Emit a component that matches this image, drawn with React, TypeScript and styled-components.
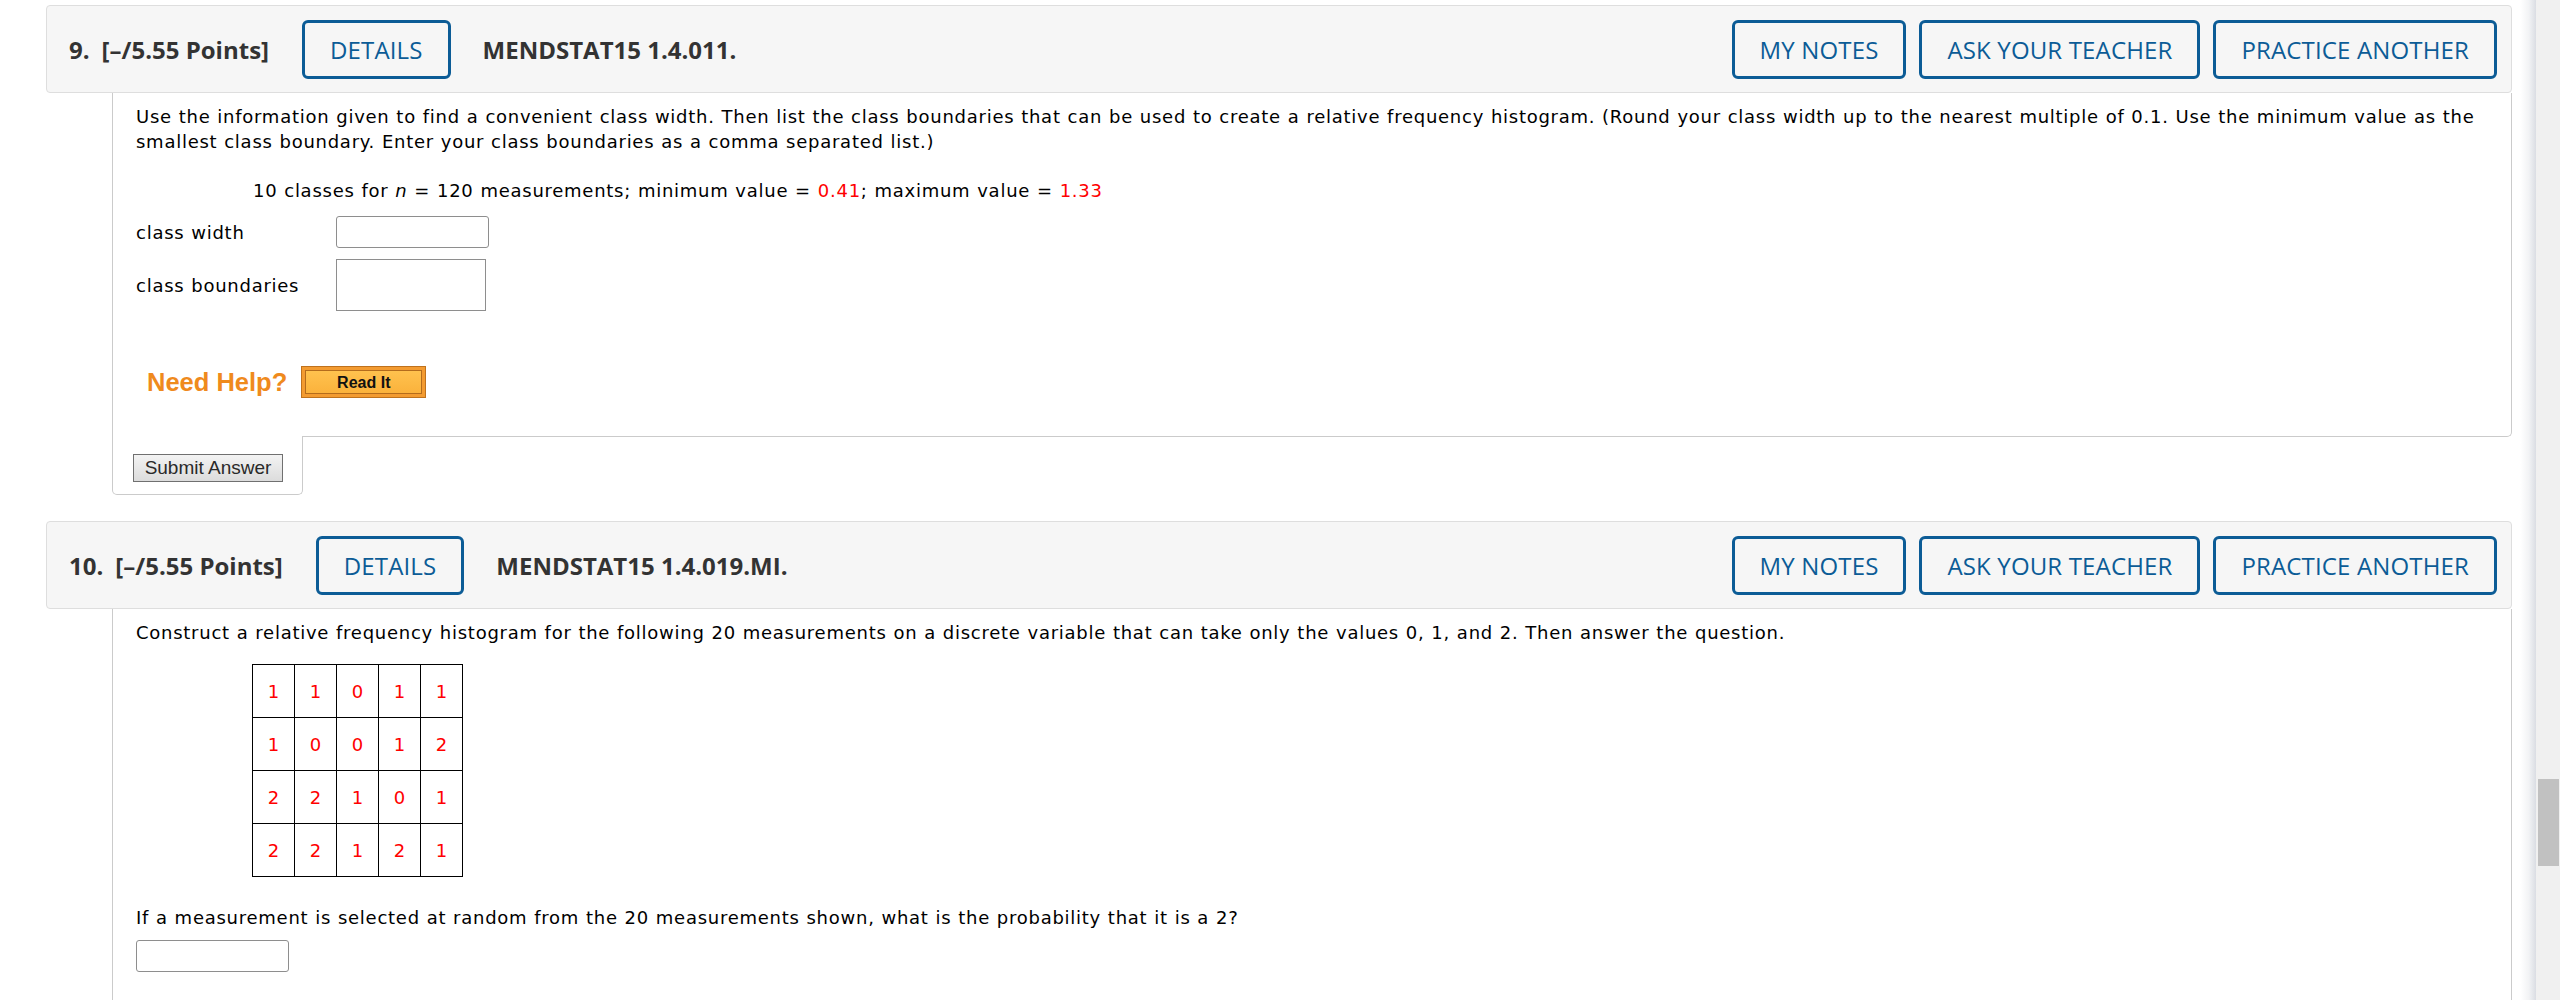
import { FC } from "react";
import styled, { createGlobalStyle } from "styled-components";

const GlobalStyle = createGlobalStyle`
	html, body {
		margin: 0;
		padding: 0;
		background: #ffffff;
		overflow: hidden;
	}
	* {
		box-sizing: border-box;
	}
`;

const HEADER_FONT = `"Open Sans", "Liberation Sans", sans-serif`;
const BODY_FONT = `Verdana, "DejaVu Sans", sans-serif`;
const ARIAL = `"Liberation Sans", Arial, sans-serif`;
const BLUE = "#0c5c96";
const RED = "#ff0000";

const measurements = [
	[1, 1, 0, 1, 1],
	[1, 0, 0, 1, 2],
	[2, 2, 1, 0, 1],
	[2, 2, 1, 2, 1],
];

type HeaderProps = {
	number: string;
	points: string;
	code: string;
};

const QuestionHeader: FC<HeaderProps> = ({ number, points, code }) => (
	<Header>
		<Number>{number}</Number>
		<Points>{points}</Points>
		<OutlineButton $gap={33}>DETAILS</OutlineButton>
		<Code>{code}</Code>
		<Actions>
			<OutlineButton>MY NOTES</OutlineButton>
			<OutlineButton>ASK YOUR TEACHER</OutlineButton>
			<OutlineButton>PRACTICE ANOTHER</OutlineButton>
		</Actions>
	</Header>
);

const App: FC = () => {
	return (
		<>
			<GlobalStyle />
			<Viewport>
				<Page>
					<Question>
						<QuestionHeader number="9." points="[–/5.55 Points]" code="MENDSTAT15 1.4.011." />
						<Body $closed>
							<Prompt>
								Use the information given to find a convenient class width. Then list the class
								boundaries that can be used to create a relative frequency histogram. (Round your
								class width up to the nearest multiple of 0.1. Use the minimum value as the smallest
								class boundary. Enter your class boundaries as a comma separated list.)
							</Prompt>
							<Given>
								10 classes for <i>n</i> = 120 measurements; minimum value = <Red>0.41</Red>; maximum
								value = <Red>1.33</Red>
							</Given>
							<FieldRow $top={13}>
								<FieldLabel>class width</FieldLabel>
								<AnswerInput $width={153} $height={32} $rounded />
							</FieldRow>
							<FieldRow $top={11}>
								<FieldLabel>class boundaries</FieldLabel>
								<AnswerInput $width={150} $height={52} />
							</FieldRow>
							<HelpRow>
								<NeedHelp>Need Help?</NeedHelp>
								<ReadIt>
									<ReadItFace>Read It</ReadItFace>
								</ReadIt>
							</HelpRow>
						</Body>
						<SubmitTab>
							<SubmitButton>Submit Answer</SubmitButton>
						</SubmitTab>
					</Question>

					<Question $top={26}>
						<QuestionHeader number="10." points="[–/5.55 Points]" code="MENDSTAT15 1.4.019.MI." />
						<Body>
							<Prompt>
								Construct a relative frequency histogram for the following 20 measurements on a
								discrete variable that can take only the values 0, 1, and 2. Then answer the
								question.
							</Prompt>
							<DataTable>
								<tbody>
									{measurements.map((row, r) => (
										<tr key={r}>
											{row.map((value, c) => (
												<DataCell key={c}>{value}</DataCell>
											))}
										</tr>
									))}
								</tbody>
							</DataTable>
							<Prompt $top={28}>
								If a measurement is selected at random from the 20 measurements shown, what is the
								probability that it is a 2?
							</Prompt>
							<AnswerBlock>
								<AnswerInput $width={153} $height={32} $rounded />
							</AnswerBlock>
						</Body>
					</Question>
				</Page>
				<Shade />
				<ScrollTrack>
					<ScrollThumb />
				</ScrollTrack>
			</Viewport>
		</>
	);
};

const Viewport = styled.div`
	display: flex;
	height: 100vh;
	overflow: hidden;
`;

const Page = styled.div`
	flex: 1;
	padding: 5px 0 0 46px;
	min-width: 0;
`;

const Question = styled.section<{ $top?: number }>`
	margin-top: ${(p) => p.$top ?? 0}px;
`;

const Header = styled.div`
	display: flex;
	align-items: center;
	height: 88px;
	padding: 0 14px 0 22px;
	background: #f6f6f6;
	border: 1px solid #dedede;
	border-radius: 4px;
	font-family: ${HEADER_FONT};
	font-size: 24px;
	font-weight: 700;
	color: #333333;
	white-space: nowrap;
`;

const Number = styled.span``;

const Points = styled.span`
	margin-left: 12px;
`;

const Code = styled.span`
	margin-left: 32px;
`;

const Actions = styled.div`
	display: flex;
	gap: 13px;
	margin-left: auto;
`;

const OutlineButton = styled.button<{ $gap?: number }>`
	display: inline-flex;
	align-items: center;
	height: 59px;
	margin-left: ${(p) => p.$gap ?? 0}px;
	padding: 0 25px;
	background: transparent;
	border: 3px solid ${BLUE};
	border-radius: 6px;
	font-family: ${HEADER_FONT};
	font-size: 24px;
	font-weight: 400;
	letter-spacing: 0.15px;
	color: ${BLUE};
	cursor: pointer;
`;

const Body = styled.div<{ $closed?: boolean }>`
	margin-left: 66px;
	padding: 11px 12px ${(p) => (p.$closed ? 38 : 80)}px 23px;
	border: 1px solid #cbcbcb;
	border-top: none;
	border-bottom: ${(p) => (p.$closed ? "1px solid #cbcbcb" : "none")};
	border-radius: 0 0 5px 0;
	font-family: ${BODY_FONT};
	font-size: 18px;
	line-height: 25px;
	letter-spacing: 0.74px;
	word-spacing: 0.4px;
	color: #000000;
`;

const Prompt = styled.p<{ $top?: number }>`
	margin: ${(p) => p.$top ?? 0}px 0 0;
`;

const Given = styled.p`
	margin: 24px 0 0;
	padding-left: 117px;
`;

const Red = styled.span`
	color: ${RED};
`;

const FieldRow = styled.div<{ $top: number }>`
	display: flex;
	align-items: center;
	margin-top: ${(p) => p.$top}px;
`;

const FieldLabel = styled.span`
	width: 200px;
`;

const AnswerInput = styled.input.attrs({ type: "text" })<{
	$width: number;
	$height: number;
	$rounded?: boolean;
}>`
	width: ${(p) => p.$width}px;
	height: ${(p) => p.$height}px;
	margin: 0;
	padding: 0 6px;
	border: 1px solid #8e8e8e;
	border-radius: ${(p) => (p.$rounded ? 3 : 0)}px;
	background: #ffffff;
	font-family: ${BODY_FONT};
	font-size: 18px;
`;

const HelpRow = styled.div`
	display: flex;
	align-items: center;
	gap: 14px;
	margin-top: 55px;
	padding-left: 11px;
	letter-spacing: 0;
	word-spacing: 0;
`;

const NeedHelp = styled.span`
	font-family: ${ARIAL};
	font-size: 25.5px;
	font-weight: 700;
	line-height: 32px;
	color: #ef8a1d;
`;

const ReadIt = styled.div`
	display: flex;
	width: 125px;
	height: 32px;
	padding: 3px;
	background: #f39b31;
	border: 1px solid #bf721d;
`;

const ReadItFace = styled.span`
	flex: 1;
	display: flex;
	align-items: center;
	justify-content: center;
	background: linear-gradient(#ffc24e, #fbb23c);
	border: 1px solid #b46c1c;
	font-family: ${ARIAL};
	font-size: 16px;
	font-weight: 700;
	color: #111111;
`;

const SubmitTab = styled.div`
	width: 191px;
	margin: -1px 0 0 66px;
	padding: 18px 0 12px 20px;
	background: #ffffff;
	border: 1px solid #cbcbcb;
	border-top: none;
	border-radius: 0 0 5px 5px;
`;

const SubmitButton = styled.button`
	display: block;
	width: 150px;
	height: 28px;
	padding: 0;
	background: linear-gradient(#f3f3f3, #dcdcdc);
	border: 1px solid #707070;
	border-radius: 0;
	font-family: ${ARIAL};
	font-size: 19px;
	color: #2a2a2a;
`;

const DataTable = styled.table`
	margin: 19px 0 0 116px;
	border-collapse: collapse;
	letter-spacing: 0;
`;

const DataCell = styled.td`
	width: 42px;
	height: 53px;
	padding: 0;
	border: 1px solid #000000;
	text-align: center;
	vertical-align: middle;
	color: ${RED};
`;

const AnswerBlock = styled.div`
	margin-top: 10px;
`;

const Shade = styled.div`
	width: 24px;
	background: linear-gradient(to right, #ffffff 35%, #f2f3f5 70%, #dadde3);
`;

const ScrollTrack = styled.div`
	width: 24px;
	padding: 779px 1px 0 2px;
	background: #f0f0f0;
`;

const ScrollThumb = styled.div`
	height: 87px;
	background: #c1c1c1;
`;

export default App;
